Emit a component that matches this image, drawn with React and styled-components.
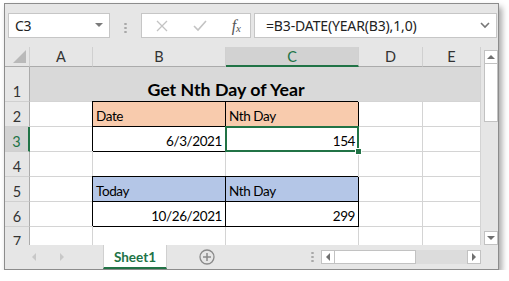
import React from 'react'
import styled, { createGlobalStyle, css } from 'styled-components'

const GREEN = '#217346'

const columns = ['A', 'B', 'C', 'D', 'E']

const rows = [
  { n: 2, cells: [{ text: 'Date', fill: '#f8cbad' }, { text: 'Nth Day', fill: '#f8cbad' }] },
  { n: 3, cells: [{ text: '6/3/2021', right: true }, { text: '154', right: true, selected: true }] },
  { n: 4, cells: null },
  { n: 5, cells: [{ text: 'Today', fill: '#b4c6e7' }, { text: 'Nth Day', fill: '#b4c6e7' }] },
  { n: 6, cells: [{ text: '10/26/2021', right: true }, { text: '299', right: true }] },
  { n: 7, cells: null },
]

const App = () => {
  return (
    <>
      <GlobalStyle />
      <Window>
        <FormulaBar>
          <NameBox>
            C3
            <Caret />
          </NameBox>
          <Grip />
          <FxBox>
            <svg width="12" height="12" viewBox="0 0 12 12">
              <path d="M1 1 L11 11 M11 1 L1 11" stroke="#c3c3c3" strokeWidth="1.3" fill="none" />
            </svg>
            <svg width="14" height="12" viewBox="0 0 14 12">
              <path d="M1 6 L5 10 L13 1" stroke="#c3c3c3" strokeWidth="1.6" fill="none" />
            </svg>
            <Fx>
              f<sub>x</sub>
            </Fx>
          </FxBox>
          <FormulaBox>
            =B3-DATE(YEAR(B3),1,0)
            <svg width="10" height="7" viewBox="0 0 10 7">
              <path d="M1 1 L5 5 L9 1" stroke="#777" strokeWidth="1.6" fill="none" />
            </svg>
          </FormulaBox>
        </FormulaBar>

        <Body>
          <Sheet>
            <Corner />
            {columns.map((c) => (
              <ColHeader key={c} active={c === 'C'}>
                {c}
              </ColHeader>
            ))}

            <RowHeader>1</RowHeader>
            <TitleCell />
            <TitleCell span={2}>Get Nth Day of Year</TitleCell>
            <TitleCell />
            <TitleCell last />

            {rows.map((r) => (
              <React.Fragment key={r.n}>
                <RowHeader active={r.n === 3}>{r.n}</RowHeader>
                <Cell />
                {r.cells ? (
                  r.cells.map((c, i) => (
                    <Cell key={i} boxed fill={c.fill} right={c.right} selected={c.selected}>
                      {c.text}
                      {c.selected && <FillHandle />}
                    </Cell>
                  ))
                ) : (
                  <>
                    <Cell />
                    <Cell />
                  </>
                )}
                <Cell />
                <Cell />
              </React.Fragment>
            ))}
          </Sheet>

          <VScroll>
            <ScrollButton>
              <Arrow dir="up" />
            </ScrollButton>
            <VThumb />
            <VTrack />
            <ScrollButton>
              <Arrow dir="down" />
            </ScrollButton>
          </VScroll>
        </Body>

        <TabBar>
          <NavArrows>
            <Arrow dir="left" light />
            <Arrow dir="right" light />
          </NavArrows>
          <SheetTab>Sheet1</SheetTab>
          <AddSheet>
            <svg width="16" height="16" viewBox="0 0 16 16">
              <circle cx="8" cy="8" r="7" stroke="#8a8a8a" strokeWidth="1.3" fill="none" />
              <path d="M8 4 V12 M4 8 H12" stroke="#8a8a8a" strokeWidth="1.5" />
            </svg>
          </AddSheet>
          <TabSpacer />
          <Grip tab />
          <HScroll>
            <ScrollButton>
              <Arrow dir="left" />
            </ScrollButton>
            <HThumb />
            <HTrack />
            <ScrollButton>
              <Arrow dir="right" />
            </ScrollButton>
          </HScroll>
        </TabBar>
      </Window>
    </>
  )
}

export default App

const GlobalStyle = createGlobalStyle`
  body {
    margin: 0;
    background: #fff;
    font-family: Lato, "Liberation Sans", sans-serif;
  }
`

const Window = styled.div`
  box-sizing: border-box;
  width: 495px;
  height: 267px;
  margin: 3px 0 0 4px;
  border: 1px solid #8c8c8c;
  background: #e6e6e6;
  box-shadow: 3px 4px 6px rgba(0, 0, 0, 0.35);
  display: flex;
  flex-direction: column;
  overflow: hidden;
`

const FormulaBar = styled.div`
  height: 43px;
  flex: none;
  box-sizing: border-box;
  display: flex;
  align-items: flex-start;
  padding: 9px 1px 0 3px;
  font-family: "Noto Sans", "Open Sans", sans-serif;
  font-size: 14px;
  color: #222;
`

const boxStyle = css`
  box-sizing: border-box;
  height: 25px;
  background: #fff;
  border: 1px solid #c6c6c6;
  display: flex;
  align-items: center;
`

const NameBox = styled.div`
  ${boxStyle};
  width: 102px;
  padding: 0 6px 0 6px;
  justify-content: space-between;
  letter-spacing: -0.3px;
`

const Caret = styled.span`
  width: 0;
  height: 0;
  border-left: 4px solid transparent;
  border-right: 4px solid transparent;
  border-top: 4px solid #7a7a7a;
  margin-top: -2px;
`

const Grip = styled.div`
  flex: none;
  width: ${(p) => (p.tab ? '17px' : '31px')};
  align-self: center;
  height: 12px;
  background: radial-gradient(circle, #a8a8a8 1px, transparent 1.4px) center top / 3px 4px repeat-y;
  margin-top: ${(p) => (p.tab ? '0' : '-4px')};
`

const FxBox = styled.div`
  ${boxStyle};
  width: 110px;
  padding: 0 9px 0 14px;
  justify-content: space-between;
`

const Fx = styled.span`
  font-family: "Liberation Serif", serif;
  font-style: italic;
  font-size: 16px;
  color: #555;
  sub {
    font-size: 11px;
    vertical-align: -1px;
  }
`

const FormulaBox = styled.div`
  ${boxStyle};
  flex: 1;
  margin-left: 3px;
  padding: 0 6px 0 11px;
  justify-content: space-between;
  font-size: 14px;
  letter-spacing: -0.15px;
`

const Body = styled.div`
  flex: 1;
  min-height: 0;
  display: flex;
  overflow: hidden;
`

const Sheet = styled.div`
  display: grid;
  grid-template-columns: 25px 63px 133px 133px 64px 58px;
  grid-template-rows: 20px 35px repeat(6, 25px);
  background: #fff;
  font-size: 13.5px;
  letter-spacing: -0.4px;
  color: #000;
  align-self: flex-start;
`

const headerBase = css`
  box-sizing: border-box;
  background: #e6e6e6;
  color: #333;
  display: flex;
  justify-content: center;
  font-size: 14.5px;
  letter-spacing: 0;
`

const Corner = styled.div`
  ${headerBase};
  border-right: 1px solid #d0d0d0;
  border-bottom: 1px solid #ababab;
  position: relative;
  &::after {
    content: '';
    position: absolute;
    right: 3px;
    bottom: 3px;
    width: 13px;
    height: 13px;
    background: #b9b9b9;
    clip-path: polygon(100% 0, 100% 100%, 0 100%);
  }
`

const ColHeader = styled.div`
  ${headerBase};
  align-items: center;
  border-right: 1px solid #d0d0d0;
  border-bottom: ${(p) => (p.active ? `2px solid ${GREEN}` : '1px solid #ababab')};
  ${(p) =>
    p.active &&
    css`
      background: #d2d2d2;
      color: ${GREEN};
    `}
`

const RowHeader = styled.div`
  ${headerBase};
  align-items: flex-end;
  padding-bottom: 1px;
  border-bottom: 1px solid #d0d0d0;
  border-right: ${(p) => (p.active ? `2px solid ${GREEN}` : '1px solid #ababab')};
  ${(p) =>
    p.active &&
    css`
      background: #d2d2d2;
      color: ${GREEN};
    `}
`

const TitleCell = styled.div`
  box-sizing: border-box;
  grid-column: span ${(p) => p.span || 1};
  background: #d9d9d9;
  border-bottom: 1px solid #d4d4d4;
  border-right: ${(p) => (p.last ? '1px solid #d4d4d4' : 'none')};
  display: flex;
  align-items: flex-end;
  justify-content: center;
  padding-bottom: 1px;
  font-weight: 700;
  font-size: 17.8px;
  letter-spacing: 0;
  color: #000;
`

const Cell = styled.div`
  box-sizing: border-box;
  position: relative;
  display: flex;
  align-items: flex-end;
  justify-content: ${(p) => (p.right ? 'flex-end' : 'flex-start')};
  padding: 0 3px 2px 3px;
  background: ${(p) => p.fill || '#fff'};
  border-right: 1px solid ${(p) => (p.boxed ? '#000' : '#d4d4d4')};
  border-bottom: 1px solid ${(p) => (p.boxed ? '#000' : '#d4d4d4')};
  ${(p) =>
    p.boxed &&
    css`
      box-shadow: -1px -1px 0 #000;
    `}
  ${(p) =>
    p.selected &&
    css`
      z-index: 1;
      &::before {
        content: '';
        position: absolute;
        inset: -1px -1px -1px -1px;
        border: 2px solid ${GREEN};
        pointer-events: none;
      }
    `}
`

const FillHandle = styled.span`
  position: absolute;
  right: -4px;
  bottom: -4px;
  width: 5px;
  height: 5px;
  background: ${GREEN};
  border: 1px solid #fff;
  z-index: 2;
`

const VScroll = styled.div`
  flex: none;
  width: 14px;
  margin-left: 3px;
  padding-top: 3px;
  display: flex;
  flex-direction: column;
`

const ScrollButton = styled.div`
  box-sizing: border-box;
  flex: none;
  width: 14px;
  height: 14px;
  background: #fff;
  border: 1px solid #c2c2c2;
  display: flex;
  align-items: center;
  justify-content: center;
`

const VThumb = styled.div`
  box-sizing: border-box;
  height: 58px;
  background: #fff;
  border: 1px solid #c2c2c2;
  border-top: none;
`

const VTrack = styled.div`
  flex: 1;
`

const arrowDirs = {
  up: css`
    border-left: 4px solid transparent;
    border-right: 4px solid transparent;
    border-bottom: 4px solid var(--c);
  `,
  down: css`
    border-left: 4px solid transparent;
    border-right: 4px solid transparent;
    border-top: 4px solid var(--c);
  `,
  left: css`
    border-top: 4px solid transparent;
    border-bottom: 4px solid transparent;
    border-right: 4px solid var(--c);
  `,
  right: css`
    border-top: 4px solid transparent;
    border-bottom: 4px solid transparent;
    border-left: 4px solid var(--c);
  `,
}

const Arrow = styled.span`
  --c: ${(p) => (p.light ? '#c8c8c8' : '#707070')};
  width: 0;
  height: 0;
  ${(p) => arrowDirs[p.dir]};
`

const TabBar = styled.div`
  height: 24px;
  flex: none;
  display: flex;
  align-items: stretch;
  padding-right: 17px;
`

const NavArrows = styled.div`
  width: 98px;
  display: flex;
  align-items: center;
  gap: 24px;
  padding-left: 27px;
  box-sizing: border-box;
`

const SheetTab = styled.div`
  width: 64px;
  box-sizing: border-box;
  background: #fff;
  border-bottom: 2px solid ${GREEN};
  border-left: 1px solid #d0d0d0;
  border-right: 1px solid #d0d0d0;
  display: flex;
  align-items: center;
  justify-content: center;
  padding-top: 1px;
  font-weight: 700;
  font-size: 13.5px;
  color: ${GREEN};
`

const AddSheet = styled.div`
  width: 80px;
  display: flex;
  align-items: center;
  justify-content: center;
`

const TabSpacer = styled.div`
  flex: 1;
`

const HScroll = styled.div`
  width: 160px;
  height: 14px;
  align-self: center;
  display: flex;
`

const HThumb = styled.div`
  box-sizing: border-box;
  width: 81px;
  background: #fff;
  border: 1px solid #c2c2c2;
  border-left: none;
`

const HTrack = styled.div`
  flex: 1;
  background: #dcdcdc;
`
